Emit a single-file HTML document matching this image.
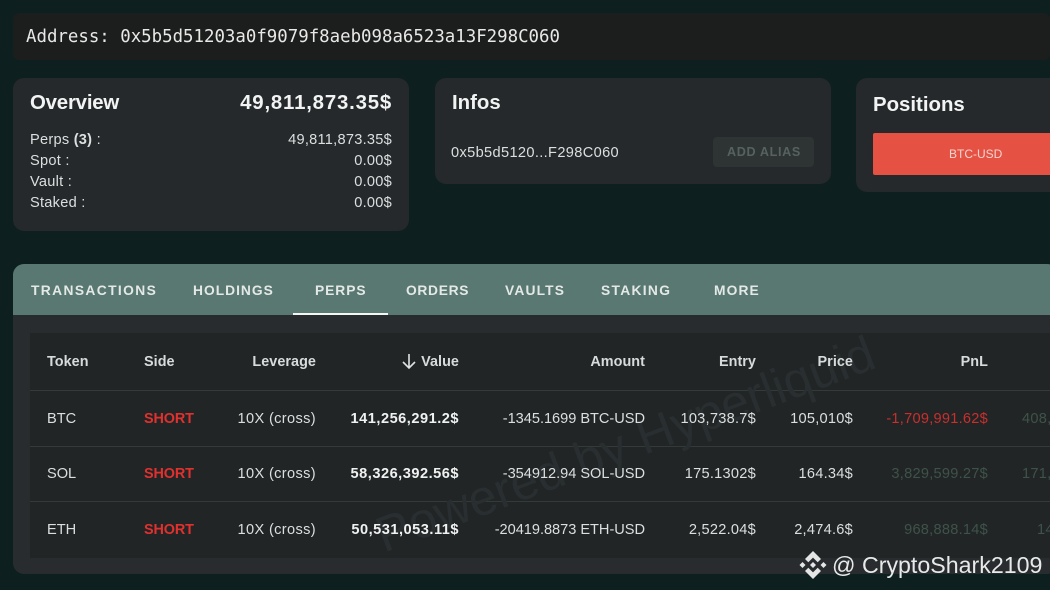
<!DOCTYPE html>
<html><head><meta charset="utf-8">
<style>
html,body{margin:0;padding:0;background:#0d1f1e}
#p{position:relative;width:1050px;height:590px;overflow:hidden;background:#0d1f1e;font-family:"Liberation Sans",sans-serif;color:#e6e8e8}
#p div{position:absolute;box-sizing:border-box}
.t{white-space:nowrap;line-height:20px;height:20px}
.r{text-align:right}
.card{background:#25292b;border-radius:11px}
.f{font-size:14.6px;letter-spacing:.25px;color:#dcdfdf}
.a{letter-spacing:-.03px}
.l{letter-spacing:.35px}
.h{font-size:14.4px;font-weight:bold;letter-spacing:.05px;color:#d8dbdb}
.tab{font-size:13.8px;font-weight:bold;color:#e4e9e7;top:281px}
.short{font-size:14.4px;font-weight:bold;color:#e0312f;letter-spacing:-.1px}
.b{font-weight:bold;color:#f0f1f1;letter-spacing:.5px}
.line{left:30px;width:1020px;height:1px;background:#34393a}
</style></head><body>
<div id="p">
<div style="left:13px;top:13px;width:1037px;height:47px;background:#1c1e1d;border-radius:6px"></div>
<div class="t" style="left:26px;top:27px;font-family:'DejaVu Sans Mono',monospace;font-size:17.4px;color:#e8e8e6">Address: 0x5b5d51203a0f9079f8aeb098a6523a13F298C060</div>

<div class="card" style="left:13px;top:78px;width:396px;height:153px"></div>
<div class="t" style="left:30px;top:93px;font-size:20.4px;font-weight:bold;letter-spacing:-.2px;color:#f2f3f3">Overview</div>
<div class="t r" style="right:658px;top:93px;font-size:20.4px;font-weight:bold;letter-spacing:.8px;color:#f2f3f3">49,811,873.35$</div>
<div class="t f" style="left:30px;top:130px">Perps <b>(3)</b> :</div>
<div class="t f" style="left:30px;top:151px">Spot :</div>
<div class="t f" style="left:30px;top:172px">Vault :</div>
<div class="t f" style="left:30px;top:193px">Staked :</div>
<div class="t f r" style="right:658px;top:130px">49,811,873.35$</div>
<div class="t f r" style="right:658px;top:151px">0.00$</div>
<div class="t f r" style="right:658px;top:172px">0.00$</div>
<div class="t f r" style="right:658px;top:193px">0.00$</div>

<div class="card" style="left:435px;top:78px;width:396px;height:106px"></div>
<div class="t" style="left:452px;top:93px;font-size:20.4px;font-weight:bold;color:#f2f3f3">Infos</div>
<div class="t f" style="left:451px;top:143px;letter-spacing:.35px">0x5b5d5120...F298C060</div>
<div style="left:713px;top:137px;width:101px;height:30px;background:#2e3333;border-radius:4px"></div>
<div class="t" style="left:727px;top:142px;font-size:12.6px;font-weight:bold;letter-spacing:.65px;color:#56625f">ADD ALIAS</div>

<div class="card" style="left:856px;top:78px;width:205px;height:114px"></div>
<div class="t" style="left:873px;top:95px;font-size:20.4px;font-weight:bold;color:#f2f3f3">Positions</div>
<div style="left:873px;top:133px;width:190px;height:42px;background:#e55244;border-radius:2px"></div>
<div class="t" style="left:949px;top:144px;font-size:12px;letter-spacing:0;color:#f3d5cf">BTC-USD</div>

<div style="left:13px;top:264px;width:1045px;height:310px;background:#282c2e;border-radius:11px"></div>
<div style="left:13px;top:264px;width:1045px;height:51px;background:#587871;border-radius:11px 11px 0 0"></div>
<div class="t tab" style="left:31px;letter-spacing:1.38px">TRANSACTIONS</div>
<div class="t tab" style="left:193px;letter-spacing:1px">HOLDINGS</div>
<div class="t tab" style="left:315px;letter-spacing:.94px">PERPS</div>
<div class="t tab" style="left:406px;letter-spacing:.68px">ORDERS</div>
<div class="t tab" style="left:505px;letter-spacing:1.16px">VAULTS</div>
<div class="t tab" style="left:601px;letter-spacing:1.31px">STAKING</div>
<div class="t tab" style="left:714px;letter-spacing:1.12px">MORE</div>
<div style="left:293px;top:313px;width:95px;height:2px;background:#f4f6f5"></div>

<div style="left:30px;top:333px;width:1020px;height:225px;background:#212526"></div>
<div class="line" style="top:390px"></div>
<div class="line" style="top:446px"></div>
<div class="line" style="top:501px"></div>

<div class="t" style="left:370px;top:355px;width:560px;height:70px;line-height:70px;font-family:'Liberation Sans',sans-serif;font-size:50px;color:#292e30;transform-origin:0 50%;transform:translate(8px,147px) rotate(-20.6deg)">Powered by Hyperliquid</div>

<div class="t h" style="left:47px;top:352px">Token</div>
<div class="t h" style="left:144px;top:352px">Side</div>
<div class="t h r" style="right:734px;top:352px">Leverage</div>
<div class="t h r" style="right:591px;top:352px">Value</div>
<svg style="position:absolute;left:401px;top:353px" width="16" height="17" viewBox="0 0 16 17"><path d="M8 1v14M2 9l6 6 6-6" fill="none" stroke="#e0e3e3" stroke-width="1.6"/></svg>
<div class="t h r" style="right:405px;top:352px">Amount</div>
<div class="t h r" style="right:294px;top:352px">Entry</div>
<div class="t h r" style="right:197px;top:352px">Price</div>
<div class="t h r" style="right:62px;top:352px">PnL</div>

<div class="t f a" style="left:47px;top:409px">BTC</div>
<div class="t short" style="left:144px;top:409px">SHORT</div>
<div class="t f r l" style="right:734px;top:409px">10X (cross)</div>
<div class="t f r b" style="right:591px;top:409px">141,256,291.2$</div>
<div class="t f r a" style="right:405px;top:409px">-1345.1699 BTC-USD</div>
<div class="t f r" style="right:294px;top:409px">103,738.7$</div>
<div class="t f r" style="right:197px;top:409px">105,010$</div>
<div class="t f" style="right:62px;top:409px;color:#c92f2d">-1,709,991.62$</div>
<div class="t f" style="left:1022px;top:409px;color:#3f5249">408,</div>

<div class="t f a" style="left:47px;top:464px">SOL</div>
<div class="t short" style="left:144px;top:464px">SHORT</div>
<div class="t f r l" style="right:734px;top:464px">10X (cross)</div>
<div class="t f r b" style="right:591px;top:464px">58,326,392.56$</div>
<div class="t f r a" style="right:405px;top:464px">-354912.94 SOL-USD</div>
<div class="t f r" style="right:294px;top:464px">175.1302$</div>
<div class="t f r" style="right:197px;top:464px">164.34$</div>
<div class="t f" style="right:62px;top:464px;color:#3f5249">3,829,599.27$</div>
<div class="t f" style="left:1022px;top:464px;color:#3f5249">171,</div>

<div class="t f a" style="left:47px;top:520px">ETH</div>
<div class="t short" style="left:144px;top:520px">SHORT</div>
<div class="t f r l" style="right:734px;top:520px">10X (cross)</div>
<div class="t f r b" style="right:591px;top:520px">50,531,053.11$</div>
<div class="t f r a" style="right:405px;top:520px">-20419.8873 ETH-USD</div>
<div class="t f r" style="right:294px;top:520px">2,522.04$</div>
<div class="t f r" style="right:197px;top:520px">2,474.6$</div>
<div class="t f" style="right:62px;top:520px;color:#3f5249">968,888.14$</div>
<div class="t f" style="left:1037px;top:520px;color:#3f5249">14</div>

<svg style="position:absolute;left:798px;top:550px" width="30" height="30" viewBox="0 0 30 30"><g fill="#e4e6e6"><path d="M15 1l8 8-3.300 3.300-4.700-4.700-4.700 4.700-3.300-3.300z"/><path d="M15 29l-8-8 3.300-3.300 4.700 4.700 4.700-4.700 3.300 3.300z"/><path d="M4.500 12l3 3-3 3-3-3z"/><path d="M25.500 12l3 3-3 3-3-3z"/><path d="M15 12l3 3-3 3-3-3z"/></g></svg>
<div class="t" style="left:832px;top:552px;height:26px;line-height:26px;font-size:23.2px;color:#e8eaea">@ CryptoShark2109</div>
</div>
</body></html>
